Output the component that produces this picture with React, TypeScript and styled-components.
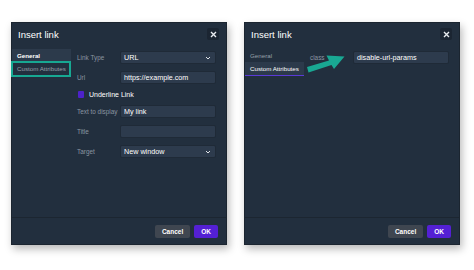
import styled, { createGlobalStyle } from "styled-components";

const GlobalStyle = createGlobalStyle`
  html, body {
    margin: 0;
    padding: 0;
    background: #ffffff;
    font-family: "Liberation Sans", Arial, sans-serif;
  }
`;

interface Field {
  label: string;
  kind: "select" | "input" | "checkbox";
  value?: string;
}

const generalFields: Field[] = [
  { label: "Link Type", kind: "select", value: "URL" },
  { label: "Url", kind: "input", value: "https://example.com" },
  { label: "Underline Link", kind: "checkbox" },
  { label: "Text to display", kind: "input", value: "My link" },
  { label: "Title", kind: "input", value: "" },
  { label: "Target", kind: "select", value: "New window" },
];

const attributeFields: Field[] = [{ label: "class", kind: "input", value: "disable-url-params" }];

const Chevron = () => (
  <svg width="6" height="4" viewBox="0 0 6 4">
    <path d="M1 1l2 2 2-2" fill="none" stroke="#dfe3e8" strokeWidth="1" />
  </svg>
);

const CloseIcon = () => (
  <svg width="7" height="7" viewBox="0 0 7 7">
    <path d="M1 1l5 5M6 1L1 6" stroke="#e8ebef" strokeWidth="1.4" />
  </svg>
);

const Arrow = () => (
  <svg width="44" height="26" viewBox="0 0 44 26">
    <path d="M3 18 L25 11.5 L22.5 6.5 L40.5 7.5 L30 20 L27.5 16 L4.5 23.5 Z" fill="#19a893" />
  </svg>
);

interface DialogProps {
  active: "general" | "custom";
  fields: Field[];
  highlight?: boolean;
  arrow?: boolean;
}

const Dialog = ({ active, fields, highlight, arrow }: DialogProps) => (
  <Card>
    <Header>
      <Title>Insert link</Title>
      <CloseButton>
        <CloseIcon />
      </CloseButton>
    </Header>
    <Body>
      <Nav>
        <Tab selected={active === "general"} bold={active === "general"}>
          General
        </Tab>
        <Tab selected={active === "custom"} underline={active === "custom"}>
          Custom Attributes
        </Tab>
        {highlight && <Highlight />}
      </Nav>
      <Form>
        {fields.map(field =>
          field.kind === "checkbox" ? (
            <CheckRow key={field.label}>
              <Checkbox />
              <CheckLabel>{field.label}</CheckLabel>
            </CheckRow>
          ) : (
            <Row key={field.label}>
              <Label>{field.label}</Label>
              <Input>
                <span>{field.value}</span>
                {field.kind === "select" && <Chevron />}
              </Input>
            </Row>
          )
        )}
        {arrow && (
          <ArrowWrap>
            <Arrow />
          </ArrowWrap>
        )}
      </Form>
    </Body>
    <Footer>
      <Button variant="secondary">Cancel</Button>
      <Button variant="primary">OK</Button>
    </Footer>
  </Card>
);

export default function App() {
  return (
    <>
      <GlobalStyle />
      <Page>
        <Dialog active="general" fields={generalFields} highlight />
        <Dialog active="custom" fields={attributeFields} arrow />
      </Page>
    </>
  );
}

const Page = styled.div`
  display: flex;
  gap: 17px;
  padding: 22px 0 0 11px;
  width: 474px;
  height: 270px;
  box-sizing: border-box;
`;

const Card = styled.div`
  width: 216px;
  height: 223px;
  display: flex;
  flex-direction: column;
  background: #222f3e;
  border: 1px solid #1b2530;
  box-sizing: border-box;
  box-shadow: 2px 4px 8px rgba(0, 0, 0, 0.28);
`;

const Header = styled.div`
  display: flex;
  align-items: center;
  justify-content: space-between;
  height: 22px;
  padding: 0 7px 0 6px;
`;

const Title = styled.div`
  color: #ffffff;
  font-size: 9.5px;
`;

const CloseButton = styled.div`
  display: flex;
  align-items: center;
  justify-content: center;
  width: 12px;
  height: 12px;
  background: #1b2532;
  border-radius: 2px;
`;

const Body = styled.div`
  flex: 1;
  display: flex;
  padding-top: 4px;
`;

const Nav = styled.div`
  position: relative;
  width: 59px;
  display: flex;
  flex-direction: column;
`;

const Tab = styled.div<{ selected?: boolean; bold?: boolean; underline?: boolean }>`
  height: ${props => (props.underline ? "14px" : "13px")};
  display: flex;
  align-items: center;
  padding-left: 5px;
  font-size: 6.2px;
  font-weight: ${props => (props.bold ? "bold" : "normal")};
  color: ${props => (props.selected ? "#ffffff" : "#97a0ab")};
  background: ${props => (props.selected ? "#2c3a4b" : "transparent")};
  border-bottom: ${props => (props.underline ? "1px solid #5a3ad6" : "none")};
  box-sizing: border-box;
`;

const Highlight = styled.div`
  position: absolute;
  left: -1px;
  top: 12px;
  width: 60px;
  height: 16px;
  border: 2px solid #17a892;
  box-sizing: border-box;
`;

const Form = styled.div`
  position: relative;
  flex: 1;
  display: flex;
  flex-direction: column;
  gap: 7px;
  padding: 2px 10px 0 6px;
`;

const Row = styled.div`
  display: flex;
  align-items: center;
  height: 13px;
`;

const Label = styled.div`
  width: 43px;
  flex-shrink: 0;
  font-size: 6.4px;
  color: #8b95a1;
  white-space: nowrap;
`;

const Input = styled.div`
  flex: 1;
  height: 13px;
  display: flex;
  align-items: center;
  justify-content: space-between;
  padding: 0 4px 0 3px;
  background: #2d3b4d;
  border: 1px solid #1f2a37;
  border-radius: 2px;
  box-sizing: border-box;
  color: #ffffff;
  font-size: 7.2px;
`;

const CheckRow = styled.div`
  display: flex;
  align-items: center;
  gap: 5px;
  height: 7px;
  padding-left: 1px;
`;

const Checkbox = styled.div`
  width: 6px;
  height: 7px;
  background: #4d22c9;
  border-radius: 1px;
`;

const CheckLabel = styled.div`
  color: #ffffff;
  font-size: 7px;
`;

const ArrowWrap = styled.div`
  position: absolute;
  left: 0;
  top: 0;
`;

const Footer = styled.div`
  display: flex;
  justify-content: flex-end;
  gap: 4px;
  height: 27px;
  padding: 7px 8px 0 0;
  box-sizing: border-box;
  border-top: 1px solid #1c2631;
`;

const Button = styled.div<{ variant: "primary" | "secondary" }>`
  height: 13px;
  display: flex;
  align-items: center;
  justify-content: center;
  padding: 0 7px;
  min-width: ${props => (props.variant === "primary" ? "21px" : "32px")};
  box-sizing: border-box;
  border-radius: 2px;
  font-size: 6.5px;
  font-weight: bold;
  color: #ffffff;
  background: ${props => (props.variant === "primary" ? "#5420d4" : "#3f4650")};
`;
